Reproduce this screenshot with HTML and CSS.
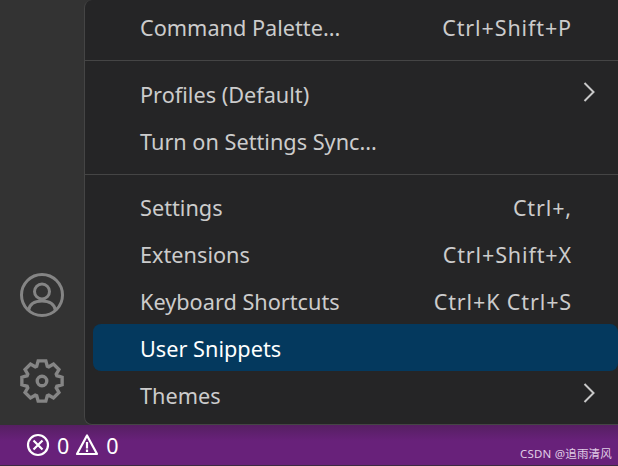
FILE: index.html
```html
<!DOCTYPE html>
<html lang="en">
<head>
<meta charset="utf-8">
<title>Manage menu</title>
<link rel="stylesheet" href="styles.css">
</head>
<body>
<div class="workbench">
  <div class="main">
    <aside class="activity">
      <svg class="act-icon" viewBox="0 0 46 46" width="46" height="46" fill="none" stroke="#858585" stroke-width="3">
        <circle cx="23" cy="23" r="20.5"/>
        <circle cx="23" cy="19.5" r="7.5"/>
        <path d="M9.500 38.500c1-6 6-9.500 13.500-9.500s12.500 3.500 13.500 9.500"/>
      </svg>
      <svg class="act-icon" viewBox="-24 -24 48 48" width="46" height="46" fill="none" stroke="#858585" stroke-width="3.500" stroke-linejoin="miter">
        <path d="M-5.500 -15.500L-4 -21H4L5.500 -15.500L7.070 -14.850L12.020 -17.680L17.680 -12.020L14.850 -7.070L15.500 -5.500L21 -4V4L15.500 5.500L14.850 7.070L17.680 12.020L12.020 17.680L7.070 14.850L5.500 15.500L4 21H-4L-5.500 15.500L-7.070 14.850L-12.020 17.680L-17.680 12.020L-14.850 7.070L-15.500 5.500L-21 4V-4L-15.500 -5.500L-14.850 -7.070L-17.680 -12.020L-12.020 -17.680L-7.070 -14.850Z"/>
        <circle cx="0" cy="0" r="5"/>
      </svg>
    </aside>
    <nav class="menu">
      <div class="item"><span>Command Palette...</span><span class="key">Ctrl+Shift+P</span></div>
      <div class="sep"></div>
      <div class="item"><span>Profiles (Default)</span><svg class="chev" viewBox="0 0 12 20" width="12" height="20" fill="none" stroke="#c8c8c8" stroke-width="2"><path d="M1.500 1l9 9-9 9"/></svg></div>
      <div class="item"><span>Turn on Settings Sync...</span></div>
      <div class="sep"></div>
      <div class="item"><span>Settings</span><span class="key">Ctrl+,</span></div>
      <div class="item"><span>Extensions</span><span class="key">Ctrl+Shift+X</span></div>
      <div class="item"><span>Keyboard Shortcuts</span><span class="key">Ctrl+K Ctrl+S</span></div>
      <div class="item active"><span>User Snippets</span></div>
      <div class="item"><span>Themes</span><svg class="chev" viewBox="0 0 12 20" width="12" height="20" fill="none" stroke="#c8c8c8" stroke-width="2"><path d="M1.500 1l9 9-9 9"/></svg></div>
    </nav>
  </div>
  <footer class="status">
    <svg viewBox="0 0 24 24" width="24" height="24" fill="none" stroke="#fff" stroke-width="2.200"><circle cx="12" cy="12" r="10"/><path d="M7.500 7.500l9 9M16.500 7.500l-9 9"/></svg>
    <span class="count">0</span>
    <svg class="warn" viewBox="0 0 24 24" width="24" height="24" fill="none" stroke="#fff" stroke-width="2.200" stroke-linejoin="round"><path d="M12 2.500L2 21h20z"/><path d="M12 9v6.500M12 16.500v2.500"/></svg>
    <span class="count">0</span>
    <span class="mark">CSDN @追雨清风</span>
  </footer>
</div>
</body>
</html>
```
FILE: styles.css
```css
* { box-sizing: border-box; }
html, body { margin: 0; height: 100%; overflow: hidden; }
body { background: #333; font-family: "Noto Sans", "Open Sans", "Noto Sans CJK SC", sans-serif; }
.workbench { width: 618px; height: 466px; display: flex; flex-direction: column; }
.main { height: 425px; display: flex; }
.activity { width: 84px; background: #333; display: flex; flex-direction: column; align-items: center; padding-top: 272px; gap: 40px; }
.act-icon { display: block; flex: none; }
.menu { flex: 1; background: #252526; border-left: 1px solid #454545; border-bottom: 1px solid #454545; border-radius: 8px 0 0 8px; padding: 4px 0 0 8px; color: #cccccc; font-size: 21.7px; }
.item { height: 47px; display: flex; align-items: center; justify-content: space-between; padding: 0 46px 0 47px; }
.item.active { background: #04395e; color: #fff; border-radius: 8px; margin: -1px 0 1px; padding-top: 2px; }
.sep { height: 1px; background: #454545; margin: 9px 0 10px -8px; }
.item + .sep + .item + .item + .sep { margin-bottom: 9px; }
.key { color: #cccccc; font-size: 21.5px; letter-spacing: .88px; }
.chev { margin-right: -23px; margin-top: -6px; }
.status { height: 41px; background: linear-gradient(#561f62, #68217a 16px); border-bottom: 1px solid #3c2a42; color: #fff; display: flex; align-items: center; padding: 0 0 0 26px; font-size: 21.5px; }
.count { margin: 0 7px; }
.warn { margin-left: -1px; }
.mark { margin-left: auto; margin-right: 6px; margin-top: 15px; font-size: 11.5px; letter-spacing: .2px; color: #e0cde6; }
```
